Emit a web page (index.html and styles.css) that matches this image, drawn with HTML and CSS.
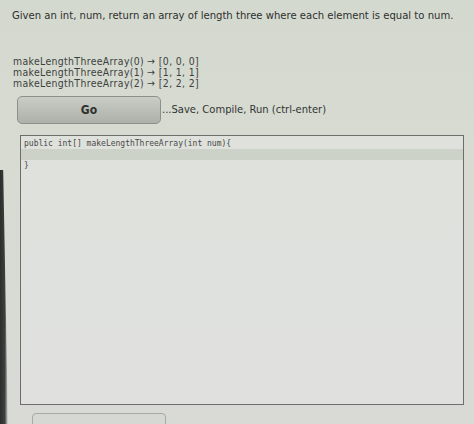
FILE: index.html
```html
<!DOCTYPE html>
<html>
<head>
<meta charset="utf-8">
<link rel="stylesheet" href="styles.css">
</head>
<body>
<div class="page">
  <p class="title">Given an int, num, return an array of length three where each element is equal to num.</p>
  <div class="examples">
    <div>makeLengthThreeArray(0) → [0, 0, 0]</div>
    <div>makeLengthThreeArray(1) → [1, 1, 1]</div>
    <div>makeLengthThreeArray(2) → [2, 2, 2]</div>
  </div>
  <div class="run-row">
    <button class="go">Go</button>
    <span class="hint">...Save, Compile, Run (ctrl-enter)</span>
  </div>
  <div class="editor">
    <div class="line">public int[] makeLengthThreeArray(int num){</div>
    <div class="line active"></div>
    <div class="line">}</div>
  </div>
  <div class="bottom-row">
    <div class="btn2"></div>
  </div>
</div>
<div class="edge"></div>
</body>
</html>
```
FILE: styles.css
```css
html, body {
  margin: 0;
  padding: 0;
  width: 474px;
  height: 424px;
  overflow: hidden;
}
body {
  background: linear-gradient(180deg, #d4d9cf 0%, #d7dbd2 40%, #d9dad6 100%);
  color: #3a3d3a;
  font-family: "DejaVu Sans Condensed", "DejaVu Sans", sans-serif;
  position: relative;
}
.page {
  padding: 9px 0 0 12px;
}
.title {
  margin: 0;
  font-size: 11.2px;
  line-height: 14px;
  color: #2e302e;
}
.examples {
  margin-top: 33px;
  padding-left: 1px;
  font-size: 10.4px;
  line-height: 11.2px;
  letter-spacing: 0.35px;
  color: #3d403d;
}
.run-row {
  margin-top: 6px;
  display: flex;
  align-items: center;
  padding-left: 5px;
}
.go {
  width: 144px;
  height: 28px;
  border: 1px solid #8c908a;
  border-radius: 5px;
  background: linear-gradient(180deg, #c9cdc6 0%, #b9bdb6 55%, #adb1aa 100%);
  font-family: "DejaVu Sans Condensed", "DejaVu Sans", sans-serif;
  font-weight: bold;
  font-size: 12px;
  color: #2f312f;
  padding: 0;
}
.hint {
  margin-left: 1px;
  font-size: 11.1px;
  color: #333533;
}
.editor {
  margin-top: 11px;
  margin-left: 8px;
  width: 444px;
  height: 270px;
  border: 1px solid #6b6e6a;
  background: linear-gradient(180deg, #dfe1dc 0%, #e0e1df 100%);
  padding-top: 2px;
  box-sizing: border-box;
}
.line {
  height: 11px;
  line-height: 11px;
  font-family: "DejaVu Sans Mono", monospace;
  font-size: 8px;
  color: #474a47;
  padding-left: 3px;
}
.line.active {
  background: #cdd2c8;
}
.bottom-row {
  margin-top: 8px;
  padding-left: 20px;
}
.btn2 {
  width: 132px;
  height: 14px;
  border: 1px solid #a7aaa5;
  border-radius: 4px 4px 0 0;
  background: #d6d8d3;
}
.edge {
  position: absolute;
  left: 0;
  top: 170px;
  width: 8px;
  height: 254px;
  background: linear-gradient(90deg, #2b2d2b 0%, #3e403e 60%, rgba(120,122,118,0) 100%);
  clip-path: polygon(0 0, 40% 0, 100% 100%, 0 100%);
}
```
